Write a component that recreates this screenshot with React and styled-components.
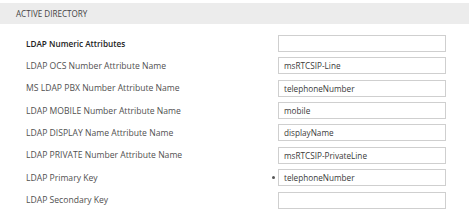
import React from "react";
import styled, { createGlobalStyle } from "styled-components";

const Global = createGlobalStyle`
  html, body { margin: 0; padding: 0; background: #fff; }
  body { font-family: "Open Sans", "Liberation Sans", sans-serif; }
`;

const Page = styled.div`
  width: 474px;
  height: 211px;
  overflow: hidden;
  padding-top: 3px;
  box-sizing: border-box;
`;

const Header = styled.div`
  width: 469px;
  height: 21px;
  background: #ececec;
  display: flex;
  align-items: center;
  padding-left: 16px;
  box-sizing: border-box;
  font-size: 8.1px;
  color: #444;
`;

const Form = styled.div`
  display: grid;
  grid-template-columns: 244px 8px 168px;
  grid-auto-rows: 22.45px;
  padding-top: 8px;
  padding-left: 26px;
  align-items: center;
`;

const Label = styled.div`
  font-size: ${(p) => (p.$bold ? "8.2px" : "8.6px")};
  color: ${(p) => (p.$bold ? "#222" : "#505050")};
  font-weight: ${(p) => (p.$bold ? 600 : 400)};
  white-space: nowrap;
`;

const Marker = styled.div`
  display: flex;
  justify-content: center;
  &::before {
    content: "";
    display: ${(p) => (p.$on ? "block" : "none")};
    width: 3px;
    height: 3px;
    border-radius: 50%;
    background: #555;
    margin-right: 2px;
  }
`;

const Input = styled.div`
  height: 17px;
  box-sizing: border-box;
  border: 1px solid #cfcfcf;
  background: #fff;
  display: flex;
  align-items: center;
  padding-left: 5px;
  font-size: 8.2px;
  color: #3a3a3a;
`;

const rows = [
  { label: "LDAP Numeric Attributes", value: "", bold: true },
  { label: "LDAP OCS Number Attribute Name", value: "msRTCSIP-Line" },
  { label: "MS LDAP PBX Number Attribute Name", value: "telephoneNumber" },
  { label: "LDAP MOBILE Number Attribute Name", value: "mobile" },
  { label: "LDAP DISPLAY Name Attribute Name", value: "displayName" },
  { label: "LDAP PRIVATE Number Attribute Name", value: "msRTCSIP-PrivateLine" },
  { label: "LDAP Primary Key", value: "telephoneNumber", marked: true },
  { label: "LDAP Secondary Key", value: "" },
];

export default function App() {
  return (
    <Page>
      <Global />
      <Header>ACTIVE DIRECTORY</Header>
      <Form>
        {rows.map((r) => (
          <React.Fragment key={r.label}>
            <Label $bold={r.bold}>{r.label}</Label>
            <Marker $on={r.marked} />
            <Input>{r.value}</Input>
          </React.Fragment>
        ))}
      </Form>
    </Page>
  );
}
